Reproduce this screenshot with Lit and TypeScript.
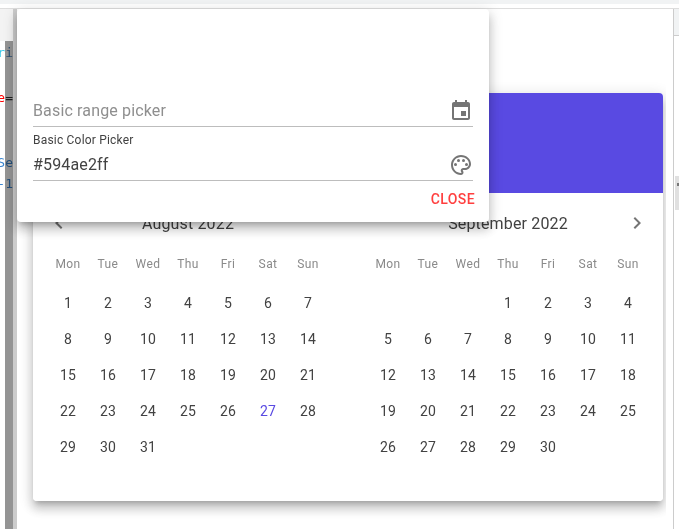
import { LitElement, html, css, svg } from "lit";
import { customElement } from "lit/decorators.js";

const DAY_NAMES = ["Mon", "Tue", "Wed", "Thu", "Fri", "Sat", "Sun"];

const chevronLeft = svg`<path d="M15.41 7.41L14 6l-6 6 6 6 1.41-1.41L10.83 12z"/>`;
const chevronRight = svg`<path d="M10 6L8.59 7.41 13.17 12l-4.58 4.58L10 18l6-6z"/>`;
const eventIcon = svg`<path d="M17 12h-5v5h5v-5zM16 1v2H8V1H6v2H5c-1.11 0-1.99.9-1.99 2L3 19c0 1.1.89 2 2 2h14c1.1 0 2-.9 2-2V5c0-1.1-.9-2-2-2h-1V1h-2zm3 18H5V8h14v11z"/>`;
const paletteIcon = svg`<path d="M12 22C6.49 22 2 17.51 2 12S6.49 2 12 2s10 4.04 10 9c0 3.31-2.69 6-6 6h-1.77c-.28 0-.5.22-.5.5 0 .12.05.23.13.33.41.47.64 1.06.64 1.67 0 1.38-1.12 2.5-2.5 2.5zm0-18c-4.41 0-8 3.59-8 8s3.59 8 8 8c.28 0 .5-.22.5-.5 0-.16-.08-.28-.14-.35-.41-.46-.63-1.05-.63-1.65 0-1.38 1.12-2.5 2.5-2.5H16c2.21 0 4-1.79 4-4 0-3.86-3.59-7-8-7z"/><circle cx="6.5" cy="11.5" r="1.5"/><circle cx="9.5" cy="7.5" r="1.5"/><circle cx="14.5" cy="7.5" r="1.5"/><circle cx="17.5" cy="11.5" r="1.5"/>`;

const icon = (content: unknown) =>
  html`<svg class="icon" viewBox="0 0 24 24" width="24" height="24" fill="currentColor">${content}</svg>`;

@customElement("app-root")
export class AppRoot extends LitElement {
  static styles = css`
    :host {
      display: block;
      width: 679px;
      height: 529px;
      overflow: hidden;
      position: relative;
      background: #fff;
      font-family: Roboto, "Liberation Sans", sans-serif;
      color: #424242;
    }
    .page {
      display: flex;
      flex-direction: column;
      height: 529px;
    }
    .tabs {
      height: 4px;
      background: #f1f3f4;
      margin-bottom: 4px;
      flex: none;
    }
    .rule {
      height: 1px;
      background: #ddd;
      flex: none;
    }
    .body {
      flex: 1;
      display: flex;
      min-height: 0;
    }
    .gutter {
      width: 13px;
      flex: none;
      display: flex;
      flex-direction: column;
    }
    .gutter-top {
      height: 32px;
      background: #f3f3f3;
      flex: none;
    }
    .code {
      flex: 1;
      position: relative;
      overflow: hidden;
      font-family: "DejaVu Sans Mono", monospace;
      font-size: 13px;
      line-height: 20px;
      white-space: nowrap;
    }
    .code-line {
      display: flex;
      justify-content: flex-end;
    }
    .l1 { margin-top: 2px; color: #4a86c0; }
    .l2 { margin-top: 25px; color: #333; }
    .l3 { margin-top: 45px; color: #3a85d0; }
    .l4 { margin-top: 1px; color: #3a85d0; }
    .cyan { color: #35c8e8; }
    .red { color: #f00; }
    .shade {
      position: absolute;
      left: 5px;
      right: 0;
      top: 0;
      bottom: 0;
      background: #949494;
      mix-blend-mode: multiply;
    }
    .divider {
      width: 4px;
      background: #ccc;
      flex: none;
    }
    .main {
      flex: 1;
      padding: 84px 3px 0 16px;
      margin-right: 7px;
      min-width: 0;
      overflow: hidden;
    }
    .card {
      height: 408px;
      border-radius: 4px;
      background: #fff;
      overflow: hidden;
    }
    .card-shadow {
      border-radius: 4px;
      box-shadow: 0 5px 5px -3px rgba(0, 0, 0, 0.2),
        0 8px 10px 1px rgba(0, 0, 0, 0.14), 0 3px 14px 2px rgba(0, 0, 0, 0.12);
    }
    .banner {
      height: 100px;
      background: #594ae2;
    }
    .months {
      display: flex;
      gap: 40px;
      padding: 18px 15px 0;
    }
    .month {
      width: 280px;
    }
    .month-head {
      display: flex;
      align-items: center;
      height: 24px;
      color: #424242;
      font-size: 16px;
      letter-spacing: 0.15px;
    }
    .month-head .title {
      flex: 1;
      text-align: center;
    }
    .nav {
      width: 24px;
      height: 24px;
      flex: none;
      color: #757575;
    }
    .nav-left {
      margin-left: -1px;
    }
    .nav-right {
      margin-right: -1px;
    }
    .icon {
      display: block;
      flex: none;
    }
    .grid {
      display: grid;
      grid-template-columns: repeat(7, 40px);
    }
    .names {
      margin-top: 20px;
      height: 18px;
      margin-bottom: 12px;
    }
    .name {
      text-align: center;
      font-size: 12px;
      line-height: 18px;
      letter-spacing: 0.4px;
      color: #8a8a8a;
    }
    .day {
      height: 36px;
      line-height: 36px;
      text-align: center;
      font-size: 14px;
      letter-spacing: 0.14px;
      color: #424242;
    }
    .today {
      color: #594ae2;
    }
    .right-gutter {
      width: 6px;
      flex: none;
      border-left: 1px solid #ccc;
      box-sizing: border-box;
    }
    .minimap {
      height: 27px;
      box-sizing: border-box;
      background: #f1f3f4;
      border-bottom: 1px solid #ccc;
    }
    .scroll {
      margin: 140px 0 0 1px;
      height: 34px;
      background: #e0e0e0;
      display: flex;
      justify-content: flex-end;
      padding-top: 7px;
      box-sizing: border-box;
    }
    .scroll i {
      display: block;
      width: 2px;
      height: 3px;
      background: #777;
    }
    .popup {
      position: absolute;
      left: 17px;
      top: 9px;
      width: 472px;
      height: 213px;
      box-sizing: border-box;
      padding: 86px 16px 0;
      background: #fff;
      border-radius: 4px;
      box-shadow: 0 5px 5px -3px rgba(0, 0, 0, 0.2),
        0 8px 10px 1px rgba(0, 0, 0, 0.14), 0 3px 14px 2px rgba(0, 0, 0, 0.12);
      display: flex;
      flex-direction: column;
    }
    .field {
      display: flex;
      align-items: center;
      justify-content: space-between;
      border-bottom: 1px solid #bdbdbd;
      font-size: 16px;
      letter-spacing: 0.15px;
      color: #424242;
      box-sizing: border-box;
    }
    .field .icon {
      color: #757575;
    }
    .range {
      height: 32px;
      color: #8f8f8f;
    }
    .label {
      margin-top: 6px;
      font-size: 12px;
      line-height: 14px;
      letter-spacing: 0.2px;
      color: #424242;
    }
    .color {
      height: 34px;
      padding-top: 2px;
    }
    .actions {
      display: flex;
      justify-content: flex-end;
      margin: 9px -2px 0 0;
    }
    .close {
      font-size: 14px;
      font-weight: 500;
      line-height: 18px;
      letter-spacing: 0.4px;
      color: #ff3f3f;
      text-transform: uppercase;
    }
  `;

  private month(name: string, blanks: number, days: number, today: number, side: "left" | "right") {
    const cells = [];
    for (let i = 0; i < blanks; i++) cells.push(html`<div class="day"></div>`);
    for (let d = 1; d <= days; d++) {
      cells.push(html`<div class="day ${d === today ? "today" : ""}">${d}</div>`);
    }
    return html`
      <div class="month">
        <div class="month-head">
          <div class="nav nav-left">${side === "left" ? icon(chevronLeft) : ""}</div>
          <div class="title">${name}</div>
          <div class="nav nav-right">${side === "right" ? icon(chevronRight) : ""}</div>
        </div>
        <div class="grid names">
          ${DAY_NAMES.map((n) => html`<div class="name">${n}</div>`)}
        </div>
        <div class="grid">${cells}</div>
      </div>
    `;
  }

  render() {
    return html`
      <div class="page">
        <div class="tabs"></div>
        <div class="rule"></div>
        <div class="body">
          <div class="gutter">
            <div class="gutter-top"></div>
            <div class="code">
              <div class="code-line l1"><span class="cyan">r</span>i</div>
              <div class="code-line l2"><span class="red">e</span>=</div>
              <div class="code-line l3">Se</div>
              <div class="code-line l4">-1</div>
              <div class="shade"></div>
            </div>
          </div>
          <div class="divider"></div>
          <div class="main">
            <div class="card-shadow">
              <div class="card">
                <div class="banner"></div>
                <div class="months">
                  ${this.month("August 2022", 0, 31, 27, "left")}
                  ${this.month("September 2022", 3, 30, 0, "right")}
                </div>
              </div>
            </div>
          </div>
          <div class="right-gutter">
            <div class="minimap"></div>
            <div class="scroll"><i></i></div>
          </div>
        </div>
      </div>
      <div class="popup">
        <div class="field range">
          <span>Basic range picker</span>
          ${icon(eventIcon)}
        </div>
        <div class="label">Basic Color Picker</div>
        <div class="field color">
          <span>#594ae2ff</span>
          ${icon(paletteIcon)}
        </div>
        <div class="actions"><span class="close">Close</span></div>
      </div>
    `;
  }
}
